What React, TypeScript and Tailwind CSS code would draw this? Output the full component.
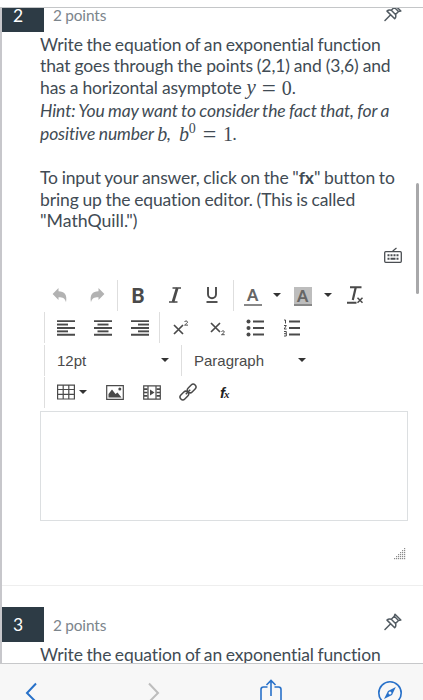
import type { ReactNode } from "react";

const INK = "#4a4e52";

function Pin() {
  return (
    <svg width="18" height="18" viewBox="0 0 18 18" fill="none" stroke="#525b62" strokeWidth="1.5" strokeLinejoin="round" strokeLinecap="round">
      <path d="M1 16.500 6.200 11.300M11 1.200 16.800 7l-2.300.5-3 3c.6 1.700.3 3.200-.8 4.300L3 7.100c1.100-1.100 2.600-1.400 4.300-.8l3-3zM10.300 3.300l4.200 4.200M7.300 6.300l4.200 4.200" />
    </svg>
  );
}

function Header({ n, clipped }: { n: string; clipped?: boolean }) {
  return (
    <div className={clipped ? "flex h-[24px] items-end" : "flex h-[35px] items-end"}>
      <div className={"flex w-[42px] justify-center bg-[#2d3b45] pr-[10px] text-[17.5px] text-white " + (clipped ? "h-[24px] items-start leading-[15px]" : "h-[35px] items-center leading-[35px]")}>
        {n}
      </div>
      <div className={"ml-[9px] flex-1 text-[15.4px] tracking-[-0.1px] text-[#7c858c] [word-spacing:-0.500px] " + (clipped ? "h-[24px] leading-[15px]" : "h-[35px] leading-[36px]")}>2 points</div>
      <div className={"mr-[21px] w-[18px] overflow-hidden " + (clipped ? "flex h-[24px] items-start" : "h-[29px]")}>
        <div className={clipped ? "-mt-[4px]" : ""}><Pin /></div>
      </div>
    </div>
  );
}

function Line({ children, className = "h-[21.7px]" }: { children?: ReactNode; className?: string }) {
  return <div className={"flex items-center whitespace-pre " + className}>{children}</div>;
}

function Cell({ children, className = "w-[37px]" }: { children: ReactNode; className?: string }) {
  return <div className={"flex shrink-0 items-center justify-center " + className}>{children}</div>;
}

const Sep = () => <div className="h-[31px] w-px shrink-0 bg-[#dedede]" />;
const Caret = () => (
  <svg width="8" height="4" viewBox="0 0 8 4"><path d="M0 0h8L4 4z" fill="#333" /></svg>
);

function Undo({ flip }: { flip?: boolean }) {
  return (
    <svg width="16" height="16" viewBox="0 0 16 16" className={flip ? "-scale-x-100" : ""}>
      <path d="M6.500 1v3.200c6 .2 9 3.600 7.500 11-.8-3.700-3-5-7.500-5V13L.600 7z" fill="#b2b2b2" />
    </svg>
  );
}

function Align({ kind }: { kind: "left" | "center" | "right" }) {
  const x = kind === "left" ? 0 : kind === "center" ? 3.5 : 7;
  return (
    <svg width="18" height="16" viewBox="0 0 18 16" fill="#4a4a4a">
      <path d="M0 .200h18v1.900H0zM0 7h18v1.900H0zM0 13.800h18v1.900H0z" />
      <rect x={x} y="3.600" width="11" height="1.900" />
      <rect x={x} y="10.400" width="11" height="1.900" />
    </svg>
  );
}

function Toolbar() {
  return (
    <div className="flex h-[128px] flex-col text-[#4a4a4a]">
      <div className="flex h-[32px] items-center pb-[2px] pl-[39px]">
        <Cell><Undo /></Cell>
        <Cell><Undo flip /></Cell>
        <div className="ml-[2px] flex"><Sep /></div>
        <Cell className="ml-[2px] w-[36px]"><span className="font-[Lato] text-[20px] font-black leading-none">B</span></Cell>
        <Cell>
          <svg width="14" height="16" viewBox="0 0 14 16" stroke="#4a4a4a" fill="none"><path d="M4.500 1H13M1 15h8.500" strokeWidth="1.400" /><path d="M9.200 1 5 15" strokeWidth="2.700" /></svg>
        </Cell>
        <Cell>
          <svg width="12" height="16" viewBox="0 0 12 16" stroke="#4a4a4a" fill="none"><path d="M2 0v7.200a4 4 0 0 0 8 0V0" strokeWidth="1.900" /><path d="M.500 15h11" strokeWidth="1.900" /></svg>
        </Cell>
        <div className="ml-[3px] flex"><Sep /></div>
        <Cell>
          <span className="mt-[3px] flex h-[19px] w-[18px] justify-center border-b-2 border-[#888] font-[Lato] text-[16px] font-black leading-[16px] text-[#666]">A</span>
        </Cell>
        <Cell className="w-[12px]"><Caret /></Cell>
        <Cell className="w-[39px]">
          <span className="mt-[3px] flex h-[19px] w-[18px] justify-center border-b-2 border-[#888] bg-[#bdbdbd] font-[Lato] text-[16px] font-black leading-[17px] text-[#666]">A</span>
        </Cell>
        <Cell className="w-[12px]"><Caret /></Cell>
        <Cell className="ml-[2px] w-[38px]">
          <svg width="18" height="18" viewBox="0 0 18 18" stroke="#4a4a4a" fill="none"><path d="M4 1.300h11.500M1 16.800h9.500" strokeWidth="1.900" /><path d="M9.700 1.500 6.800 14" strokeWidth="2.200" /><path d="m11.500 11.700 5 5m0-5-5 5" strokeWidth="1.500" /></svg>
        </Cell>
      </div>

      <div className="flex h-[32px] items-center pb-px pl-[42px]">
        <Sep />
        <Cell className="ml-[2px] w-[37px]"><Align kind="left" /></Cell>
        <Cell><Align kind="center" /></Cell>
        <Cell><Align kind="right" /></Cell>
        <div className="ml-[1px] flex"><Sep /></div>
        <Cell className="ml-[3px] w-[36px]">
          <svg width="16" height="16" viewBox="0 0 16 16" stroke="#4a4a4a" fill="none"><path d="m1 5 9 9m0-9-9 9" strokeWidth="1.700" /><path d="M11.500 2c.5-1.500 3-1.300 3 .2 0 1-1.800 1.800-2.900 2.900h3.400" strokeWidth="1" /></svg>
        </Cell>
        <Cell className="w-[38px]">
          <svg width="16" height="16" viewBox="0 0 16 16" stroke="#4a4a4a" fill="none"><path d="m1 3 9 9m0-9-9 9" strokeWidth="1.700" /><path d="M11.500 11.700c.5-1.300 2.800-1.100 2.800.2 0 1-1.700 1.700-2.800 2.800h3.200" strokeWidth="1" /></svg>
        </Cell>
        <Cell className="w-[36px]">
          <svg width="18" height="18" viewBox="0 0 18 18" fill="#4a4a4a"><circle cx="2.500" cy="2.500" r="2" /><circle cx="2.500" cy="9" r="2" /><circle cx="2.500" cy="15.500" r="2" /><path d="M7 1.600h11v1.800H7zM7 8.100h11v1.800H7zM7 14.600h11v1.800H7z" /></svg>
        </Cell>
        <Cell className="w-[38px]">
          <svg width="18" height="18" viewBox="0 0 18 18" fill="none" stroke="#4a4a4a"><path d="M6 2.500h11M6 9h11M6 15.500h11" strokeWidth="1.800" /><path d="M1 1h1.500v3.500M1 6.500h2.300L1.200 10h2.400M1 12.500h2.300v4.500H1m0-2.300h2" strokeWidth="1" /></svg>
        </Cell>
      </div>

      <div className="flex h-[32px] items-center pl-[42px] font-['Liberation_Sans',sans-serif] text-[15px]">
        <Sep />
        <span className="ml-[12px] w-[104px] pt-[2px]">12pt</span>
        <Caret />
        <div className="ml-[12px] flex"><Sep /></div>
        <span className="ml-[12px] w-[104px] pt-[2px]">Paragraph</span>
        <Caret />
      </div>

      <div className="flex h-[32px] items-center pl-[42px]">
        <Sep />
        <Cell className="ml-[12px] w-[18px]">
          <svg width="18" height="16" viewBox="0 0 18 16" fill="none" stroke="#4a4a4a"><path d="M.600 1.200h16.800v13.800H.600zM.600 5.500h16.800M.600 10.300h16.800M6.200 1v14M11.800 1v14" strokeWidth="1.200" /></svg>
        </Cell>
        <Cell className="ml-[4px] w-[8px]"><Caret /></Cell>
        <Cell className="ml-[19px] w-[18px]">
          <svg width="18" height="15" viewBox="0 0 18 15"><path d="M.700.700h16.600v13.600H.700z" fill="none" stroke="#4a4a4a" strokeWidth="1.200" /><path d="M2.500 12.500V9l3.500-4.500L9.500 9l2-1.500 4 5z" fill="#4a4a4a" /><circle cx="13.800" cy="4" r="1.500" fill="#4a4a4a" /></svg>
        </Cell>
        <Cell className="ml-[19px] w-[18px]">
          <svg width="18" height="15" viewBox="0 0 18 15" fill="none" stroke="#4a4a4a"><path d="M.700.900h16.600v13.200H.700zM5 1v13M13 1v13" strokeWidth="1.200" /><path d="M1 4.200h3.500M1 7.500h3.500M1 10.800h3.500M13.500 4.200H17M13.500 7.500H17M13.500 10.800H17" strokeWidth="1.700" /><path d="m7 4.500 4.500 3-4.500 3z" fill="#4a4a4a" stroke="none" /></svg>
        </Cell>
        <Cell className="ml-[18px] w-[18px]">
          <svg width="18" height="18" viewBox="0 0 24 24" fill="none" stroke="#4a4a4a" strokeWidth="2"><rect x="10.400" y="3.600" width="13" height="7.400" rx="3.700" transform="rotate(-45 16.900 7.300)" /><rect x=".600" y="13" width="13" height="7.400" rx="3.700" transform="rotate(-45 7.100 16.700)" /><path d="m9 15 6-6" /></svg>
        </Cell>
        <span className="ml-[23px] font-['Liberation_Sans',sans-serif] text-[15px] font-bold italic leading-none text-[#222]">f</span>
        <span className="-ml-[1px] mt-[4px] font-['Liberation_Serif',serif] text-[11px] font-bold italic leading-none text-[#222]">x</span>
      </div>
    </div>
  );
}

const GRIP = [[11, 1], [9, 2], [7, 3], [5, 4], [3, 5], [1, 6]];

export default function App() {
  return (
    <div className="relative flex h-[700px] w-[423px] flex-col overflow-hidden bg-white font-[Lato,sans-serif] text-[17.5px] text-[#414b54]">
      <div className="h-[8px] shrink-0 border-b border-[#c4c6c8]" />
      <main className="h-[655px] shrink-0 border-l-2 border-[#c7c7cb]">
        <Header n="2" clipped />
        <div className="h-[248px] pl-[38px] pt-[2px] tracking-[-0.12px]">
          <Line className="h-[21.7px] [word-spacing:-0.8px]">Write the equation of an exponential function</Line>
          <Line className="h-[21.7px] [word-spacing:-0.4px]">that goes through the points (2,1) and (3,6) and</Line>
          <Line className="h-[21.7px] [word-spacing:-0.3px]">
            has a horizontal asymptote <span className="ml-px font-['Liberation_Serif',serif] text-[21px] italic">y</span>
            <span className="ml-[6px] font-['Liberation_Serif',serif] text-[25px] leading-none">=</span>
            <span className="ml-[6px] font-['Liberation_Serif',serif] text-[20px]">0</span>.
          </Line>
          <Line className="h-[24px] italic [word-spacing:-0.6px]">Hint: You may want to consider the fact that, for a</Line>
          <Line className="h-[22.500px] italic [word-spacing:-0.400px]">
            positive number <span className="font-['Liberation_Serif',serif] text-[20px]">b</span>,
            <span className="ml-[8px] font-['Liberation_Serif',serif] text-[20px]">b</span>
            <span className="mb-[10px] font-['Liberation_Serif',serif] text-[14px] not-italic leading-none">0</span>
            <span className="ml-[7px] font-['Liberation_Serif',serif] text-[24px] not-italic leading-none">=</span>
            <span className="ml-[7px] font-['Liberation_Serif',serif] text-[20px] not-italic">1</span>.
          </Line>
          <Line />
          <Line className="h-[21.7px] [word-spacing:-0.6px]">To input your answer, click on the "<b>fx</b>" button to</Line>
          <Line className="h-[21.7px] [word-spacing:-0.6px]">bring up the equation editor. (This is called</Line>
          <Line className="h-[21.7px] text-[17.7px] tracking-normal">"MathQuill.")</Line>
          <div className="mr-[21px] mt-[15px] flex justify-end">
            <svg width="18" height="17" viewBox="0 0 18 17" fill="none" stroke={INK}><rect x=".700" y="4.700" width="16.600" height="10.600" rx="1" strokeWidth="1.300" /><path d="M8.500 4.500 10 3l2.500-2" strokeWidth="1.200" /><path d="M3.500 8.300h11" strokeWidth="1.900" strokeDasharray="2 1" /><path d="M3.500 11.800h2m1 0h5m1 0h2" strokeWidth="1.900" /></svg>
          </div>
        </div>
        <Toolbar />
        <div className="ml-[38px] mt-[3px] h-[110px] w-[368px] border border-[#dcdfe1]" />
        <div className="flex h-[65px] justify-end border-b border-[#eeeeee] pr-[17px] pt-[27px]">
          <svg width="12" height="12" viewBox="0 0 12 12" fill="#8b8b8b">
            {GRIP.map(([x, n]) =>
              Array.from({ length: 7 - n }, (_, i) => <rect key={x + "-" + i} x={x - 1} y={10 - i * 2} width="1.200" height="1.200" />)
            )}
          </svg>
        </div>
        <div className="pt-[21px]"><Header n="3" /></div>
        <div className="pl-[38px] pt-[2px] tracking-[-0.12px]"><Line className="h-[21.7px] [word-spacing:-0.8px]">Write the equation of an exponential function</Line></div>
      </main>
      <footer className="relative flex h-[37px] shrink-0 border-t border-[#c7c8ca] bg-[#f7f7f7] pt-[15px]">
        <svg className="ml-[24px] shrink-0" width="14" height="22" viewBox="0 0 14 22" fill="none" stroke="#2871c9" strokeWidth="2"><path d="M12 4.500 3 14l9 9" /></svg>
        <svg className="ml-[109px] shrink-0" width="14" height="22" viewBox="0 0 14 22" fill="none" stroke="#bdbdbd" strokeWidth="2"><path d="m2 4.500 9 9.500-9 9" /></svg>
        <svg className="ml-[98px] shrink-0" width="24" height="22" viewBox="0 0 24 22" fill="none" stroke="#2871c9" strokeWidth="1.600"><path d="M8.500 8H4.500Q2 8 2 10.500V24M15.500 8h4Q22 8 22 10.500V24M12 17V1.500M7.500 6 12 1.500 16.500 6" /></svg>
        <svg className="ml-[94px] shrink-0" width="26" height="22" viewBox="0 0 26 22" fill="none" stroke="#2871c9" strokeWidth="1.600"><circle cx="13" cy="14" r="11.200" /><path d="m18.800 8-3.800 8-8 4 4-8z" fill="#2871c9" stroke="none" /><circle cx="13" cy="14" r="1.500" fill="#f7f7f7" stroke="none" /></svg>
      </footer>
      <div className="absolute left-[416px] top-[183px] h-[111px] w-[3px] rounded-full bg-[#a8a8aa]" />
    </div>
  );
}
